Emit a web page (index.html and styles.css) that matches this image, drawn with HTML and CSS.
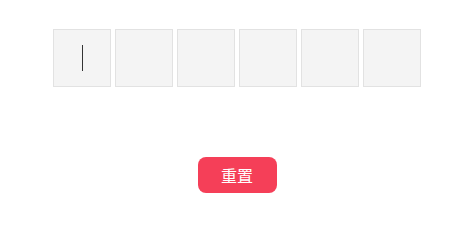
FILE: index.html
```html
<!DOCTYPE html>
<html>
<head>
<meta charset="utf-8">
<link rel="stylesheet" href="styles.css">
</head>
<body>
<div class="page">
  <div class="code-row">
    <div class="cell"><span class="caret"></span></div>
    <div class="cell"></div>
    <div class="cell"></div>
    <div class="cell"></div>
    <div class="cell"></div>
    <div class="cell"></div>
  </div>
  <button class="reset">重置</button>
</div>
</body>
</html>
```
FILE: styles.css
```css
html, body {
  margin: 0;
  padding: 0;
  background: #ffffff;
  font-family: "Noto Sans CJK SC", "Noto Sans", sans-serif;
}
.page {
  width: 474px;
  height: 244px;
  display: flex;
  flex-direction: column;
  align-items: center;
  padding-top: 29px;
  box-sizing: border-box;
}
.code-row {
  display: flex;
  gap: 4px;
}
.cell {
  width: 58px;
  height: 58px;
  box-sizing: border-box;
  border: 1px solid #e2e2e2;
  background: #f4f4f4;
  display: flex;
  align-items: center;
  justify-content: center;
}
.caret {
  width: 1.5px;
  height: 26px;
  background: #333333;
  margin-left: 1px;
}
.reset {
  margin-top: 70px;
  width: 79px;
  height: 36px;
  border: none;
  border-radius: 8px;
  background: #f53f58;
  color: #ffffff;
  font-family: "Noto Sans CJK SC", sans-serif;
  font-size: 16px;
  padding: 0;
}
```
